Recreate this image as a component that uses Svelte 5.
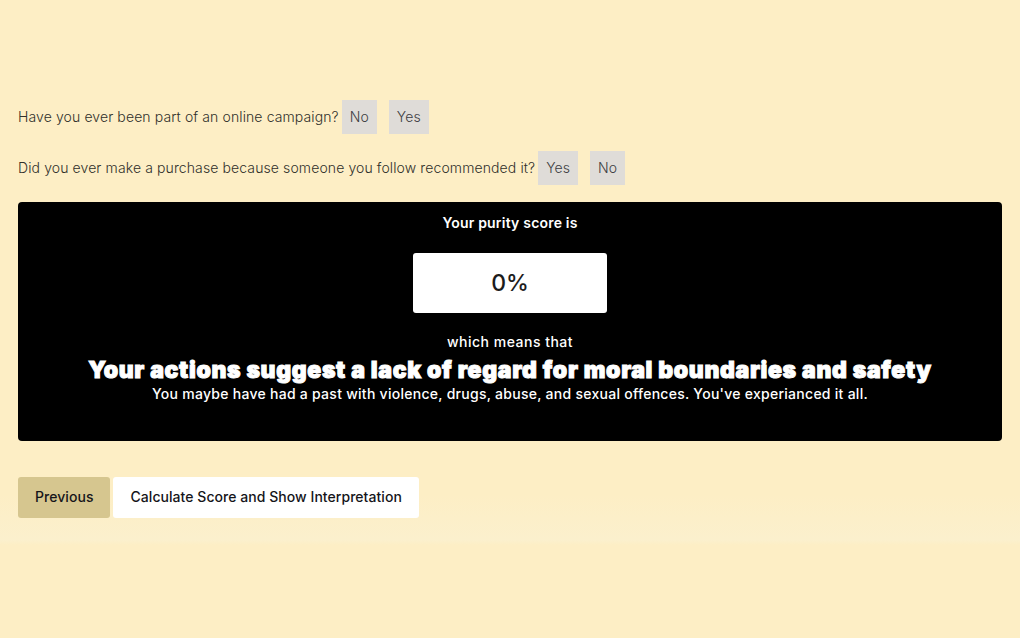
<script>
  const questions = [
    { text: "Have you ever been part of an online campaign?", options: ["No", "Yes"] },
    { text: "Did you ever make a purchase because someone you follow recommended it?", options: ["Yes", "No"] },
  ];
</script>

<main class="page">
  {#each questions as q}
    <div class="question">
      <span class="question-text">{q.text}</span>
      <div class="options">
        {#each q.options as opt}
          <button class="option">{opt}</button>
        {/each}
      </div>
    </div>
  {/each}

  <section class="result">
    <p class="score-label">Your purity score is</p>
    <div class="score">0%</div>
    <p class="means">which means that</p>
    <h2>Your actions suggest a lack of regard for moral boundaries and safety</h2>
    <p class="detail">You maybe have had a past with violence, drugs, abuse, and sexual offences. You've experianced it all.</p>
  </section>

  <div class="actions">
    <button class="previous">Previous</button>
    <button class="calculate">Calculate Score and Show Interpretation</button>
  </div>
</main>

<style>
  :global(body) {
    margin: 0;
    background: #fdeec5;
  }

  .page {
    box-sizing: border-box;
    height: 638px;
    padding: 100px 18px 0;
    font-family: Inter, "Liberation Sans", sans-serif;
    color: #30302b;
    background: linear-gradient(to bottom, #fdeec5 0, #fdeec5 495px, #fbf0cd 540px, #fdeec5 545px);
  }

  .question {
    display: flex;
    align-items: center;
    gap: 3px;
    height: 34px;
    margin-bottom: 17px;
    font-size: 14px;
    font-weight: 300;
    letter-spacing: 0.11px;
  }

  .question-text {
    padding-bottom: 2px;
  }

  .options {
    display: flex;
    gap: 12px;
  }

  button {
    border: 0;
    font-family: inherit;
  }

  .option {
    height: 34px;
    padding: 0 8px 2px;
    background: #dfdcd8;
    color: #3c3c42;
    font-size: 14px;
    font-weight: 300;
    letter-spacing: 0.1px;
  }

  .result {
    display: flex;
    flex-direction: column;
    align-items: center;
    box-sizing: border-box;
    height: 239px;
    padding-top: 12px;
    background: #000;
    border-radius: 4px;
    color: #fff;
  }

  p {
    margin: 0;
  }

  .score-label {
    font-size: 14px;
    font-weight: 600;
    line-height: 17px;
    letter-spacing: 0.2px;
  }

  .score {
    display: flex;
    align-items: center;
    justify-content: center;
    width: 194px;
    height: 60px;
    margin-top: 22px;
    background: #fff;
    border-radius: 3px;
    color: #1c1c1c;
    font-size: 23px;
    font-weight: 500;
  }

  .means {
    margin-top: 20px;
    font-size: 14px;
    font-weight: 500;
    line-height: 17px;
    letter-spacing: 0.5px;
  }

  h2 {
    margin: 6px 0 0;
    font-size: 23px;
    font-weight: 900;
    line-height: 28px;
    white-space: nowrap;
    -webkit-text-stroke: 1px #fff;
    letter-spacing: 0.66px;
  }

  .detail {
    margin-top: 1px;
    font-size: 14px;
    font-weight: 500;
    line-height: 18px;
    letter-spacing: 0.27px;
  }

  .actions {
    display: flex;
    gap: 3px;
    margin-top: 36px;
  }

  .actions button {
    height: 41px;
    padding: 0 17px 2px;
    border-radius: 3px;
    color: #15151a;
    font-size: 14px;
    font-weight: 500;
    letter-spacing: 0.05px;
  }

  .actions .previous {
    padding: 0 17px 2px;
    background: #d6c68f;
  }

  .calculate {
    background: #fff;
  }
</style>
